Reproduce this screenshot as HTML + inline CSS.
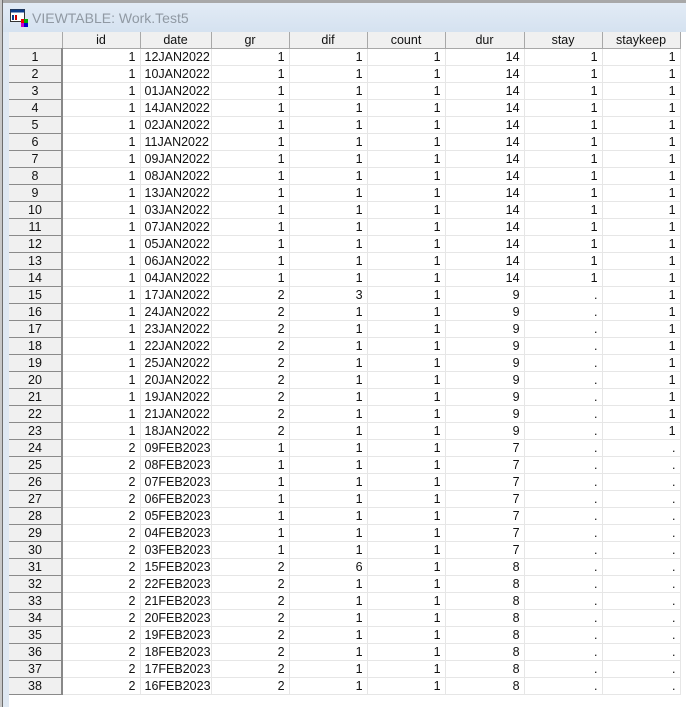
<!DOCTYPE html>
<html><head><meta charset="utf-8"><style>
body{margin:0;width:686px;height:707px;overflow:hidden;background:#fff;font-family:"Liberation Sans",Arial,sans-serif;font-size:12.5px;position:relative}
.frame{position:absolute;left:0;top:0;width:686px;height:707px;background:#fff}
.lb{position:absolute;left:0;top:0;width:2px;height:707px;background:#c8c8c8}
.lb2{position:absolute;left:2px;top:0;width:1px;height:707px;background:#6d6d6d}
.lb3{position:absolute;left:3px;top:3px;width:6px;height:704px;background:#dfe8f2}
.tt{position:absolute;left:3px;top:0;width:683px;height:3px;background:#a8a8a8}
.title{position:absolute;left:3px;top:3px;width:683px;height:29px;background:linear-gradient(#e2ebf5,#d5e2f0)}
.title span{position:absolute;left:29px;top:7px;color:#9099a3;font-size:14px}
.icon{position:absolute;left:7px;top:6px;width:18px;height:18px}
table{position:absolute;left:9px;top:32px;border-collapse:collapse;table-layout:fixed}
td{height:16px;padding:0 4px 0 0;border-right:1px solid #e6e6e6;border-bottom:1px solid #e6e6e6;text-align:right;white-space:nowrap;line-height:16px;color:#111}
td.d{text-align:left;padding:0 0 0 4px}
td.r{background:#f0f0f0;text-align:center;padding:0;border-right:2px solid #888;border-bottom:1px solid #8a8a8a}
tr.h td{background:#f0f0f0;text-align:center;padding:0;border-right:1px solid #a8a8a8;border-bottom:1px solid #a8a8a8}
</style></head><body>
<div class="frame"></div><div class="lb"></div><div class="lb2"></div><div class="lb3"></div><div class="tt"></div>
<div class="title"><svg class="icon" viewBox="0 0 18 18"><rect x="0.5" y="0.5" width="14" height="12" fill="#fff" stroke="#333"/><rect x="0.5" y="0.5" width="14" height="3" fill="#0a3c8c"/><rect x="2" y="6" width="2" height="5" fill="#0a3c8c"/><rect x="5" y="6" width="2" height="5" fill="#c00"/><rect x="11" y="10" width="3" height="4" fill="#e00"/><rect x="14" y="10" width="4" height="4" fill="#0a0"/><rect x="11" y="14" width="3" height="4" fill="#c0c"/><rect x="14" y="14" width="4" height="4" fill="#00c"/></svg><span>VIEWTABLE: Work.Test5</span></div>
<table>
<colgroup><col style="width:53px"><col style="width:78px"><col style="width:71px"><col style="width:78px"><col style="width:78px"><col style="width:78px"><col style="width:79px"><col style="width:78px"><col style="width:78px"></colgroup>
<tr class="h"><td></td><td>id</td><td>date</td><td>gr</td><td>dif</td><td>count</td><td>dur</td><td>stay</td><td>staykeep</td></tr>
<tr><td class="r">1</td><td>1</td><td class="d">12JAN2022</td><td>1</td><td>1</td><td>1</td><td>14</td><td>1</td><td>1</td></tr>
<tr><td class="r">2</td><td>1</td><td class="d">10JAN2022</td><td>1</td><td>1</td><td>1</td><td>14</td><td>1</td><td>1</td></tr>
<tr><td class="r">3</td><td>1</td><td class="d">01JAN2022</td><td>1</td><td>1</td><td>1</td><td>14</td><td>1</td><td>1</td></tr>
<tr><td class="r">4</td><td>1</td><td class="d">14JAN2022</td><td>1</td><td>1</td><td>1</td><td>14</td><td>1</td><td>1</td></tr>
<tr><td class="r">5</td><td>1</td><td class="d">02JAN2022</td><td>1</td><td>1</td><td>1</td><td>14</td><td>1</td><td>1</td></tr>
<tr><td class="r">6</td><td>1</td><td class="d">11JAN2022</td><td>1</td><td>1</td><td>1</td><td>14</td><td>1</td><td>1</td></tr>
<tr><td class="r">7</td><td>1</td><td class="d">09JAN2022</td><td>1</td><td>1</td><td>1</td><td>14</td><td>1</td><td>1</td></tr>
<tr><td class="r">8</td><td>1</td><td class="d">08JAN2022</td><td>1</td><td>1</td><td>1</td><td>14</td><td>1</td><td>1</td></tr>
<tr><td class="r">9</td><td>1</td><td class="d">13JAN2022</td><td>1</td><td>1</td><td>1</td><td>14</td><td>1</td><td>1</td></tr>
<tr><td class="r">10</td><td>1</td><td class="d">03JAN2022</td><td>1</td><td>1</td><td>1</td><td>14</td><td>1</td><td>1</td></tr>
<tr><td class="r">11</td><td>1</td><td class="d">07JAN2022</td><td>1</td><td>1</td><td>1</td><td>14</td><td>1</td><td>1</td></tr>
<tr><td class="r">12</td><td>1</td><td class="d">05JAN2022</td><td>1</td><td>1</td><td>1</td><td>14</td><td>1</td><td>1</td></tr>
<tr><td class="r">13</td><td>1</td><td class="d">06JAN2022</td><td>1</td><td>1</td><td>1</td><td>14</td><td>1</td><td>1</td></tr>
<tr><td class="r">14</td><td>1</td><td class="d">04JAN2022</td><td>1</td><td>1</td><td>1</td><td>14</td><td>1</td><td>1</td></tr>
<tr><td class="r">15</td><td>1</td><td class="d">17JAN2022</td><td>2</td><td>3</td><td>1</td><td>9</td><td>.</td><td>1</td></tr>
<tr><td class="r">16</td><td>1</td><td class="d">24JAN2022</td><td>2</td><td>1</td><td>1</td><td>9</td><td>.</td><td>1</td></tr>
<tr><td class="r">17</td><td>1</td><td class="d">23JAN2022</td><td>2</td><td>1</td><td>1</td><td>9</td><td>.</td><td>1</td></tr>
<tr><td class="r">18</td><td>1</td><td class="d">22JAN2022</td><td>2</td><td>1</td><td>1</td><td>9</td><td>.</td><td>1</td></tr>
<tr><td class="r">19</td><td>1</td><td class="d">25JAN2022</td><td>2</td><td>1</td><td>1</td><td>9</td><td>.</td><td>1</td></tr>
<tr><td class="r">20</td><td>1</td><td class="d">20JAN2022</td><td>2</td><td>1</td><td>1</td><td>9</td><td>.</td><td>1</td></tr>
<tr><td class="r">21</td><td>1</td><td class="d">19JAN2022</td><td>2</td><td>1</td><td>1</td><td>9</td><td>.</td><td>1</td></tr>
<tr><td class="r">22</td><td>1</td><td class="d">21JAN2022</td><td>2</td><td>1</td><td>1</td><td>9</td><td>.</td><td>1</td></tr>
<tr><td class="r">23</td><td>1</td><td class="d">18JAN2022</td><td>2</td><td>1</td><td>1</td><td>9</td><td>.</td><td>1</td></tr>
<tr><td class="r">24</td><td>2</td><td class="d">09FEB2023</td><td>1</td><td>1</td><td>1</td><td>7</td><td>.</td><td>.</td></tr>
<tr><td class="r">25</td><td>2</td><td class="d">08FEB2023</td><td>1</td><td>1</td><td>1</td><td>7</td><td>.</td><td>.</td></tr>
<tr><td class="r">26</td><td>2</td><td class="d">07FEB2023</td><td>1</td><td>1</td><td>1</td><td>7</td><td>.</td><td>.</td></tr>
<tr><td class="r">27</td><td>2</td><td class="d">06FEB2023</td><td>1</td><td>1</td><td>1</td><td>7</td><td>.</td><td>.</td></tr>
<tr><td class="r">28</td><td>2</td><td class="d">05FEB2023</td><td>1</td><td>1</td><td>1</td><td>7</td><td>.</td><td>.</td></tr>
<tr><td class="r">29</td><td>2</td><td class="d">04FEB2023</td><td>1</td><td>1</td><td>1</td><td>7</td><td>.</td><td>.</td></tr>
<tr><td class="r">30</td><td>2</td><td class="d">03FEB2023</td><td>1</td><td>1</td><td>1</td><td>7</td><td>.</td><td>.</td></tr>
<tr><td class="r">31</td><td>2</td><td class="d">15FEB2023</td><td>2</td><td>6</td><td>1</td><td>8</td><td>.</td><td>.</td></tr>
<tr><td class="r">32</td><td>2</td><td class="d">22FEB2023</td><td>2</td><td>1</td><td>1</td><td>8</td><td>.</td><td>.</td></tr>
<tr><td class="r">33</td><td>2</td><td class="d">21FEB2023</td><td>2</td><td>1</td><td>1</td><td>8</td><td>.</td><td>.</td></tr>
<tr><td class="r">34</td><td>2</td><td class="d">20FEB2023</td><td>2</td><td>1</td><td>1</td><td>8</td><td>.</td><td>.</td></tr>
<tr><td class="r">35</td><td>2</td><td class="d">19FEB2023</td><td>2</td><td>1</td><td>1</td><td>8</td><td>.</td><td>.</td></tr>
<tr><td class="r">36</td><td>2</td><td class="d">18FEB2023</td><td>2</td><td>1</td><td>1</td><td>8</td><td>.</td><td>.</td></tr>
<tr><td class="r">37</td><td>2</td><td class="d">17FEB2023</td><td>2</td><td>1</td><td>1</td><td>8</td><td>.</td><td>.</td></tr>
<tr><td class="r">38</td><td>2</td><td class="d">16FEB2023</td><td>2</td><td>1</td><td>1</td><td>8</td><td>.</td><td>.</td></tr>
</table>
</body></html>
